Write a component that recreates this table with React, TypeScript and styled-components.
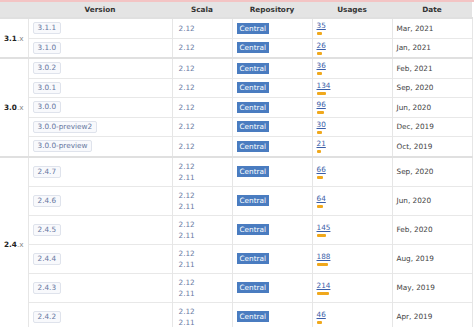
import React from 'react';
import styled, { createGlobalStyle } from 'styled-components';

const Global = createGlobalStyle`
  body {
    margin: 0;
    background: #ffffff;
    font-family: "DejaVu Sans", Verdana, sans-serif;
  }
`;

const Page = styled.div`
  border-top: 2px solid #f3c4c4;
  width: 474px;
  overflow: hidden;
`;

const Table = styled.table`
  width: 472px;
  table-layout: fixed;
  border-collapse: collapse;
  font-size: 7.3px;
  color: #444;
`;

const Head = styled.th`
  background: #e4e4e4;
  height: 15px;
  padding: 0;
  font-weight: bold;
  color: #333;
  text-align: center;
`;

const Row = styled.tr<{ $first?: boolean }>`
  border-top: ${(p) => (p.$first ? '2px solid #e0e0e0' : '1px solid #e8e8e8')};
`;

const Cell = styled.td<{ $h: number }>`
  height: ${(p) => p.$h}px;
  padding: 0 0 0 4px;
  border-left: 1px solid #e6e6e6;
  border-right: 1px solid #e6e6e6;
  vertical-align: middle;
  line-height: 11px;
`;

const GroupCell = styled.td`
  padding: 0 0 0 4px;
  vertical-align: middle;
  border-right: 1px solid #e6e6e6;
  color: #888;
`;

const Strong = styled.b`
  color: #222;
`;

const VersionTag = styled.span`
  display: inline-block;
  border: 1px solid #dfe3ec;
  border-radius: 2px;
  background: #f8f9fc;
  color: #6676a0;
  padding: 0 4px;
  line-height: 10px;
`;

const Scala = styled.div`
  color: #6a7aa3;
  padding-left: 2px;
`;

const Repo = styled.span`
  display: inline-block;
  background: #4a7cc0;
  color: #fff;
  padding: 0 3px;
  line-height: 11px;
`;

const UsageLink = styled.a`
  display: block;
  color: #3a5ea8;
  text-decoration: underline;
  line-height: 9px;
`;

const Bar = styled.div`
  height: 3px;
  margin-top: 2px;
  border-radius: 1px;
  background: #f0a81c;
`;

const DateText = styled.span`
  color: #444;
`;

type Rel = { v: string; scala: string[]; use: number; date: string };

const groups: { label: string; rows: Rel[] }[] = [
  {
    label: '3.1',
    rows: [
      { v: '3.1.1', scala: ['2.12'], use: 35, date: 'Mar, 2021' },
      { v: '3.1.0', scala: ['2.12'], use: 26, date: 'Jan, 2021' },
    ],
  },
  {
    label: '3.0',
    rows: [
      { v: '3.0.2', scala: ['2.12'], use: 36, date: 'Feb, 2021' },
      { v: '3.0.1', scala: ['2.12'], use: 134, date: 'Sep, 2020' },
      { v: '3.0.0', scala: ['2.12'], use: 96, date: 'Jun, 2020' },
      { v: '3.0.0-preview2', scala: ['2.12'], use: 30, date: 'Dec, 2019' },
      { v: '3.0.0-preview', scala: ['2.12'], use: 21, date: 'Oct, 2019' },
    ],
  },
  {
    label: '2.4',
    rows: [
      { v: '2.4.7', scala: ['2.12', '2.11'], use: 66, date: 'Sep, 2020' },
      { v: '2.4.6', scala: ['2.12', '2.11'], use: 64, date: 'Jun, 2020' },
      { v: '2.4.5', scala: ['2.12', '2.11'], use: 145, date: 'Feb, 2020' },
      { v: '2.4.4', scala: ['2.12', '2.11'], use: 188, date: 'Aug, 2019' },
      { v: '2.4.3', scala: ['2.12', '2.11'], use: 214, date: 'May, 2019' },
      { v: '2.4.2', scala: ['2.12', '2.11'], use: 46, date: 'Apr, 2019' },
    ],
  },
];

export default function App() {
  return (
    <Page>
      <Global />
      <Table>
        <colgroup>
          <col style={{ width: 28 }} />
          <col style={{ width: 144 }} />
          <col style={{ width: 60 }} />
          <col style={{ width: 80 }} />
          <col style={{ width: 80 }} />
          <col style={{ width: 80 }} />
        </colgroup>
        <thead>
          <tr>
            <Head />
            <Head>Version</Head>
            <Head>Scala</Head>
            <Head>Repository</Head>
            <Head>Usages</Head>
            <Head>Date</Head>
          </tr>
        </thead>
        <tbody>
          {groups.map((g) =>
            g.rows.map((r, i) => {
              const h = r.scala.length > 1 ? 28 : 18.5;
              return (
                <Row key={r.v} $first={i === 0}>
                  {i === 0 && (
                    <GroupCell rowSpan={g.rows.length}>
                      <Strong>{g.label}</Strong>.x
                    </GroupCell>
                  )}
                  <Cell $h={h}>
                    <VersionTag>{r.v}</VersionTag>
                  </Cell>
                  <Cell $h={h}>
                    {r.scala.map((s) => (
                      <Scala key={s}>{s}</Scala>
                    ))}
                  </Cell>
                  <Cell $h={h}>
                    <Repo>Central</Repo>
                  </Cell>
                  <Cell $h={h}>
                    <UsageLink>{r.use}</UsageLink>
                    <Bar style={{ width: 4 + r.use * 0.04 }} />
                  </Cell>
                  <Cell $h={h}>
                    <DateText>{r.date}</DateText>
                  </Cell>
                </Row>
              );
            })
          )}
        </tbody>
      </Table>
    </Page>
  );
}
